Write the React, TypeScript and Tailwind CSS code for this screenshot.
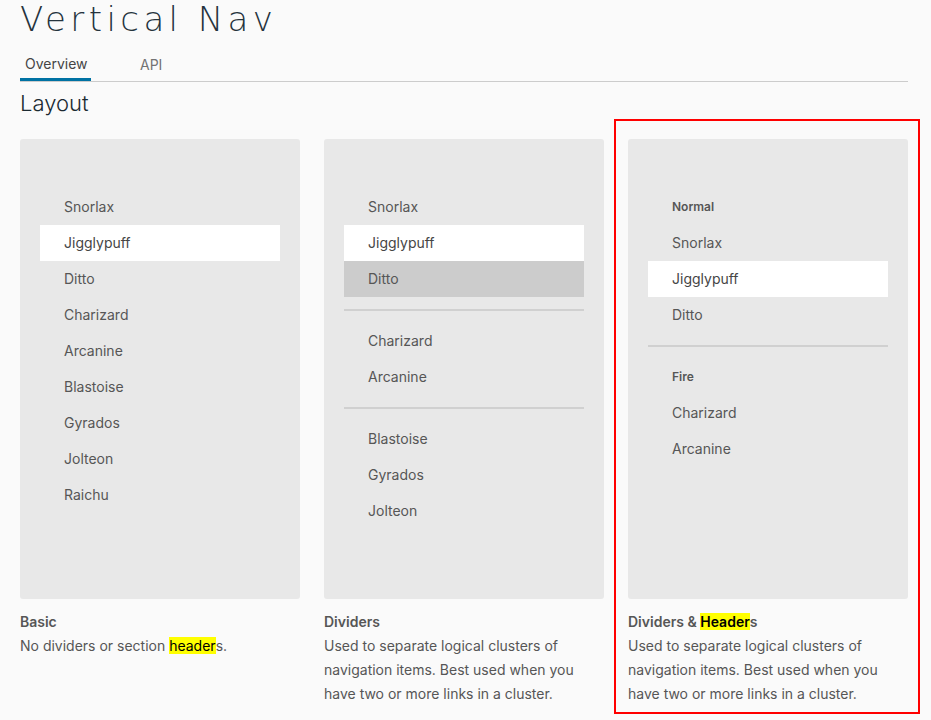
import React from 'react';

type Entry =
  | { kind: 'item'; label: string; state?: 'active' | 'hover' }
  | { kind: 'header'; label: string }
  | { kind: 'divider' };

interface Example {
  title: React.ReactNode;
  description: React.ReactNode;
  entries: Entry[];
}

const Mark: React.FC<{ children: React.ReactNode }> = ({ children }) => (
  <mark className="bg-[#ffff00] text-black">{children}</mark>
);

const item = (label: string, state?: 'active' | 'hover'): Entry => ({ kind: 'item', label, state });

const examples: Example[] = [
  {
    title: 'Basic',
    description: (
      <>
        No dividers or section <Mark>header</Mark>s.
      </>
    ),
    entries: [
      item('Snorlax'),
      item('Jigglypuff', 'active'),
      item('Ditto'),
      item('Charizard'),
      item('Arcanine'),
      item('Blastoise'),
      item('Gyrados'),
      item('Jolteon'),
      item('Raichu'),
    ],
  },
  {
    title: 'Dividers',
    description: 'Used to separate logical clusters of navigation items. Best used when you have two or more links in a cluster.',
    entries: [
      item('Snorlax'),
      item('Jigglypuff', 'active'),
      item('Ditto', 'hover'),
      { kind: 'divider' },
      item('Charizard'),
      item('Arcanine'),
      { kind: 'divider' },
      item('Blastoise'),
      item('Gyrados'),
      item('Jolteon'),
    ],
  },
  {
    title: (
      <>
        Dividers &amp; <Mark>Header</Mark>s
      </>
    ),
    description: 'Used to separate logical clusters of navigation items. Best used when you have two or more links in a cluster.',
    entries: [
      { kind: 'header', label: 'Normal' },
      item('Snorlax'),
      item('Jigglypuff', 'active'),
      item('Ditto'),
      { kind: 'divider' },
      { kind: 'header', label: 'Fire' },
      item('Charizard'),
      item('Arcanine'),
    ],
  },
];

const NavEntry: React.FC<{ entry: Entry }> = ({ entry }) => {
  if (entry.kind === 'divider') {
    return <div className="mt-3 mb-3 h-[2px] bg-[#d0d0d0]" />;
  }
  if (entry.kind === 'header') {
    return (
      <div className="h-9 pl-6 flex items-center text-xs font-semibold text-[#565656]">{entry.label}</div>
    );
  }
  const bg =
    entry.state === 'active' ? 'bg-white text-[#454545]' : entry.state === 'hover' ? 'bg-[#cccccc] text-[#565656]' : 'text-[#565656]';
  return <div className={`h-9 pl-6 flex items-center text-sm ${bg}`}>{entry.label}</div>;
};

const ExampleCard: React.FC<{ example: Example }> = ({ example }) => (
  <div className="flex flex-col">
    <div className="h-[460px] rounded-[3px] bg-[#e8e8e8] px-5 pt-[50px]">
      <nav className="flex flex-col">
        {example.entries.map((entry, i) => (
          <NavEntry key={i} entry={entry} />
        ))}
      </nav>
    </div>
    <div className="mt-[11px] text-sm leading-6 font-semibold text-[#565656]">{example.title}</div>
    <p className="text-sm leading-6 text-[#565656]">{example.description}</p>
  </div>
);

export default function App() {
  return (
    <div
      className="relative min-h-[720px] bg-[#fafafa] pl-5 pr-[23px] overflow-hidden"
      style={{ fontFamily: 'Inter, "Noto Sans", sans-serif' }}
    >
      {/* Page title */}
      <div className="h-[48px]">
        <h1
          className="text-[34px] leading-[38px] font-extralight tracking-[4.4px] text-[#25333d]"
          style={{ fontFamily: '"DejaVu Sans", Inter, sans-serif' }}
        >
          Vertical Nav
        </h1>
      </div>

      {/* Tabs */}
      <div className="h-[34px] border-b border-[#cccccc] flex">
        <div className="h-[33px] w-[71px] pl-[5px] pt-px flex items-center border-b-[3px] border-[#0072a3] text-sm text-[#454545]">
          Overview
        </div>
        <div className="h-[33px] ml-[49px] pt-px flex items-center text-sm text-[#737373]">API</div>
      </div>

      <h2 className="mt-[7px] text-[22px] leading-[28px] font-light text-[#1b2a32]">Layout</h2>

      <div className="mt-[22px] grid grid-cols-3 gap-6">
        {examples.map((example, i) => (
          <ExampleCard key={i} example={example} />
        ))}
      </div>

      {/* highlight annotation */}
      <div className="absolute left-[614px] top-[119px] w-[306px] h-[595px] border-2 border-[#ff0000] pointer-events-none" />
    </div>
  );
}
